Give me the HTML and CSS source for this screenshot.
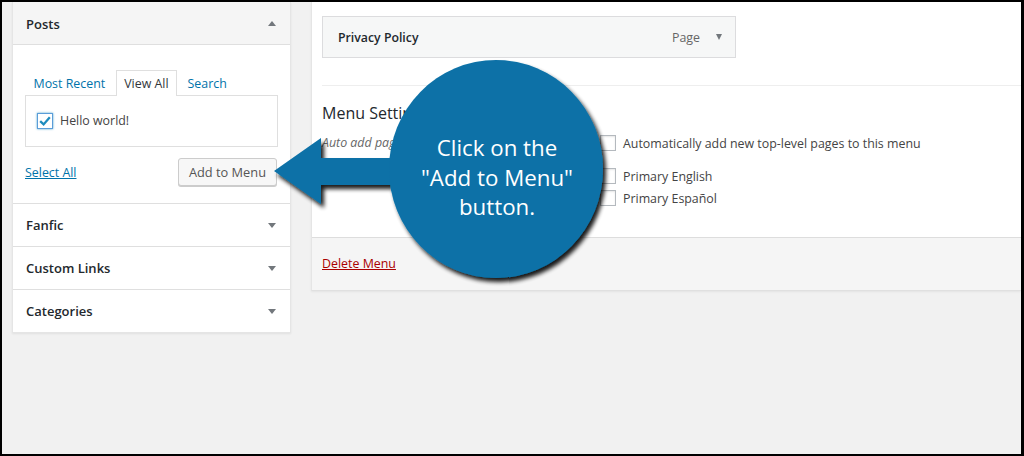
FILE: index.html
```html
<!DOCTYPE html>
<html lang="en">
<head>
<meta charset="utf-8">
<title>Menus</title>
<link rel="stylesheet" href="styles.css">
</head>
<body>
<div class="frame">
  <div class="layout">
    <aside class="side">
      <div class="box">
        <div class="box-head posts-head"><h3>Posts</h3><span class="tri up"></span></div>
        <div class="box-body">
          <ul class="tabs">
            <li class="tab">Most Recent</li>
            <li class="tab active">View All</li>
            <li class="tab">Search</li>
          </ul>
          <div class="tab-panel">
            <label class="check-row"><span class="cb checked"><svg viewBox="0 0 16 16" width="16" height="16"><path d="M3.2 8.2 L6.6 11.4 L12.8 4.2" fill="none" stroke="#1e8cbe" stroke-width="2.3"/></svg></span>Hello world!</label>
          </div>
          <div class="actions">
            <a class="link">Select All</a>
            <button class="btn">Add to Menu</button>
          </div>
        </div>
        <div class="box-head row"><h3>Fanfic</h3><span class="tri down"></span></div>
        <div class="box-head row"><h3>Custom Links</h3><span class="tri down"></span></div>
        <div class="box-head row"><h3>Categories</h3><span class="tri down"></span></div>
      </div>
    </aside>

    <main class="menu-panel">
      <div class="panel-body">
        <div class="menu-item">
          <span class="item-title">Privacy Policy</span>
          <span class="item-type">Page</span>
          <span class="tri down small"></span>
        </div>
        <div class="settings">
          <h3 class="settings-title">Menu Settings</h3>
          <div class="setting-row first">
            <div class="setting-label">Auto add pages</div>
            <div class="setting-opts">
              <label class="opt"><span class="cb"></span>Automatically add new top-level pages to this menu</label>
            </div>
          </div>
          <div class="setting-row">
            <div class="setting-label">Display location</div>
            <div class="setting-opts">
              <label class="opt"><span class="cb"></span>Primary English</label>
              <label class="opt"><span class="cb"></span>Primary Español</label>
            </div>
          </div>
        </div>
      </div>
      <div class="panel-foot">
        <a class="delete">Delete Menu</a>
      </div>
    </main>
  </div>

  <div class="callout">
    <svg class="callout-shape" viewBox="260 50 360 250" width="360" height="250">
      <defs>
        <filter id="sh" x="-20%" y="-20%" width="140%" height="140%">
          <feGaussianBlur in="SourceAlpha" stdDeviation="2"/>
          <feOffset dx="3" dy="4" result="b"/>
          <feComponentTransfer><feFuncA type="linear" slope="0.9"/></feComponentTransfer>
          <feMerge><feMergeNode/><feMergeNode in="SourceGraphic"/></feMerge>
        </filter>
      </defs>
      <g filter="url(#sh)" fill="#0a71a7">
        <polygon points="274,171 321,138 321,158 430,158 430,185 321,185 321,204"/>
        <ellipse cx="496" cy="169" rx="107" ry="109"/>
      </g>
    </svg>
    <div class="callout-text">Click on the<br>"Add to Menu"<br>button.</div>
  </div>
</div>
</body>
</html>
```

FILE: styles.css
```css
* { box-sizing: border-box; }
html, body { margin: 0; padding: 0; }
body {
  font-family: "Open Sans", "Noto Sans", sans-serif;
  font-size: 12.4px;
  color: #444;
  background: #000;
}
.frame {
  position: relative;
  width: 1024px;
  height: 456px;
  border-style: solid;
  border-color: #000;
  border-width: 2px 3px 2px 2px;
  background: #f1f1f1;
  overflow: hidden;
}
.layout {
  display: flex;
  align-items: flex-start;
  gap: 20px;
  padding-left: 10px;
}

/* left accordion */
.side { width: 279px; flex: none; }
.box {
  background: #fff;
  border: 1px solid #e5e5e5;
  border-top: none;
  box-shadow: 0 1px 2px rgba(0,0,0,.07);
}
.box-head {
  display: flex;
  align-items: center;
  justify-content: space-between;
  height: 43px;
  padding: 0 14px 0 13px;
  border-top: 1px solid #dfdfdf;
}
.box-head h3 {
  margin: 0;
  font-size: 13px;
  font-weight: 600;
  color: #23282d;
}
.posts-head {
  height: 43px;
  border-top: none;
  border-bottom: 1px solid #dfdfdf;
  background: #f5f5f5;
}
.posts-head h3 { position: relative; top: 1px; }
.tri { width: 0; height: 0; border-left: 4px solid transparent; border-right: 4px solid transparent; }
.tri.up { border-bottom: 5px solid #72777c; }
.tri.down { border-top: 5px solid #72777c; }
.tri.small { border-left-width: 3.5px; border-right-width: 3.5px; border-top-width: 6px; }

.box-body { padding: 25px 12px 17px 12px; }
.tabs {
  list-style: none;
  margin: 0;
  padding: 0;
  display: flex;
  gap: 2px;
}
.tab {
  height: 26px;
  line-height: 25px;
  padding: 0 7.5px;
  color: #0073aa;
  border: 1px solid transparent;
  border-bottom: none;
  margin-bottom: -1px;
  position: relative;
}
.tab.active {
  color: #32373c;
  background: #fff;
  border-color: #dfdfdf;
  z-index: 1;
}
.tab-panel {
  height: 52px;
  border: 1px solid #dfdfdf;
  background: #fff;
  padding: 16px 11px 0;
}
.check-row { display: flex; align-items: center; gap: 7px; color: #444; }
.cb {
  width: 16px;
  height: 16px;
  flex: none;
  border: 1px solid #b4b9be;
  background: #fff;
  box-shadow: inset 0 1px 2px rgba(0,0,0,.1);
  display: inline-block;
  position: relative;
}
.cb.checked {
  border-color: #5b9dd9;
  box-shadow: 0 0 2px rgba(30,140,190,.8);
}
.cb svg { position: absolute; left: -1px; top: -1px; }

.actions {
  display: flex;
  justify-content: space-between;
  align-items: center;
  margin-top: 11px;
}
.link { color: #0073aa; text-decoration: underline; }
.btn {
  font-family: inherit;
  font-size: 12.8px;
  color: #555;
  background: #f7f7f7;
  border: 1px solid #ccc;
  border-radius: 3px;
  box-shadow: 0 1px 0 #ccc;
  height: 28px;
  padding: 0 10px;
  margin-right: 1px;
}

/* right panel */
.menu-panel {
  flex: 1;
  background: #fff;
  border-left: 1px solid #e5e5e5;
  border-bottom: 1px solid #e0e0e0;
  box-shadow: 0 1px 2px rgba(0,0,0,.06);
}
.panel-body { padding: 14px 0 0 10px; }
.menu-item {
  width: 414px;
  height: 42px;
  display: flex;
  align-items: center;
  padding: 0 13px 0 15px;
  background: #f6f7f7;
  border: 1px solid #dcdcde;
}
.item-title { font-size: 12.3px; font-weight: 600; color: #23282d; flex: 1; }
.item-type { color: #666; margin-right: 16px; }
.settings {
  margin-top: 27px;
  border-top: 1px solid #eee;
  padding: 16px 0 28px;
}
.settings-title {
  margin: 0;
  font-size: 16px;
  line-height: 22px;
  font-weight: 400;
  color: #23282d;
}
.setting-row { display: flex; }
.setting-row.first { margin-top: 9px; }
.setting-row + .setting-row { margin-top: 12px; }
.setting-label {
  width: 278px;
  font-style: italic;
  color: #666;
  line-height: 20px;
}
.setting-opts { display: flex; flex-direction: column; }
.opt { display: flex; align-items: center; gap: 7px; height: 20px; color: #444; }
.setting-row + .setting-row .opt { height: 22px; }
.panel-foot {
  height: 53px;
  border-top: 1px solid #ddd;
  background: #f5f5f5;
  display: flex;
  align-items: center;
  padding-left: 10px;
  padding-bottom: 1px;
}
.delete { color: #a00; text-decoration: underline; }

/* callout overlay */
.callout-shape { position: absolute; left: 258px; top: 48px; }
.callout-text {
  position: absolute;
  left: 395px;
  top: 131px;
  width: 200px;
  text-align: center;
  color: #fff;
  font-size: 22.3px;
  line-height: 29.5px;
}
```
